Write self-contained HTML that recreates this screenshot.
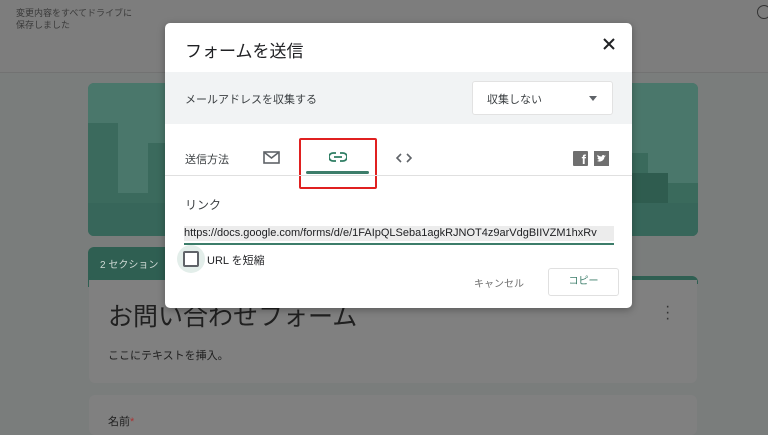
<!DOCTYPE html>
<html><head><meta charset="utf-8"><style>
*{margin:0;padding:0;box-sizing:border-box}
body{width:768px;height:428px;overflow:hidden;background:#7a7d7c;font-family:"Liberation Sans","Noto Sans CJK JP",sans-serif;position:relative}
.top{position:absolute;left:0;top:0;width:768px;height:73px;background:#7d7d7d;border-bottom:1px solid #727272}
.a{position:absolute}
</style></head><body>
<div class="top"></div>
<div class="a" style="left:16px;top:7px;font-size:9px;line-height:12px;color:#3a3a3a">変更内容をすべてドライブに<br>保存しました</div>
<div class="a" style="left:757px;top:5px;width:14px;height:14px;border:1.5px solid #333;border-radius:50%"></div>
<div class="a" style="left:88px;top:83px;width:610px;height:153px;background:#3c6a5e;border-radius:6px;overflow:hidden">
<svg width="610" height="153"><rect width="610" height="153" fill="#4a776b"/><path d="M0 120 L0 40 L30 40 L30 110 L60 110 L60 60 L110 60 L110 120 Z" fill="#3b6a5d"/><path d="M520 153 L520 70 L560 70 L560 100 L610 100 L610 153Z" fill="#3a6a5c"/><path d="M540 120 L540 90 L580 90 L580 120Z" fill="#2f5c4f"/><rect x="0" y="120" width="610" height="33" fill="#37665a"/></svg></div>
<div class="a" style="left:88px;top:247px;width:140px;height:40px;background:#2f5f52;border-radius:6px 6px 0 0;color:#cfd9d5;font-size:10px;padding:9px 12px">2 セクション</div>
<div class="a" style="left:88px;top:276px;width:610px;height:8px;background:#2f5f52;border-radius:6px 6px 0 0"></div>
<div class="a" style="left:89px;top:280px;width:608px;height:103px;background:#808080;border-radius:0 0 6px 6px"></div>
<div class="a" style="left:108px;top:297px;font-size:25px;color:#202020">お問い合わせフォーム</div>
<div class="a" style="left:108px;top:347px;font-size:11px;color:#202020">ここにテキストを挿入。</div>
<div class="a" style="left:665px;top:304px;font-size:16px;color:#333;line-height:6px">·<br>·<br>·</div>
<div class="a" style="left:89px;top:395px;width:608px;height:40px;background:#808080;border-radius:6px"></div>
<div class="a" style="left:108px;top:413px;font-size:11px;color:#202020">名前<span style="color:#a33">*</span></div>
<div class="a" style="left:165px;top:23px;width:467px;height:285px;background:#fff;border-radius:5px;overflow:hidden;box-shadow:0 2px 8px rgba(0,0,0,.3)">
 <div class="a" style="left:20px;top:14px;font-size:17px;color:#202124">フォームを送信</div>
 <svg class="a" style="left:438px;top:15px" width="12" height="12"><path d="M1 1L11 11M11 1L1 11" stroke="#202124" stroke-width="2"/></svg>
 <div class="a" style="left:0;top:49px;width:467px;height:52px;background:#f1f3f4"></div>
 <div class="a" style="left:20px;top:68px;font-size:11px;color:#3c4043">メールアドレスを収集する</div>
 <div class="a" style="left:307px;top:58px;width:141px;height:34px;background:#fff;border:1px solid #e2e2e2;border-radius:3px;font-size:11px;color:#3c4043;padding:9px 14px">収集しない<span style="position:absolute;right:15px;top:14px;border:4px solid transparent;border-top:5px solid #5f6368"></span></div>
 <div class="a" style="left:20px;top:128px;font-size:11px;color:#3c4043">送信方法</div>
 <svg class="a" style="left:98px;top:128px" width="17" height="13"><rect x="1" y="1" width="15" height="11" fill="none" stroke="#5f6368" stroke-width="1.6"/><path d="M1.5 1.5 L8.5 7 L15.5 1.5" fill="none" stroke="#5f6368" stroke-width="1.6"/></svg>
 <svg class="a" style="left:164px;top:129px" width="18" height="10"><path d="M7 1H4a4 4 0 0 0 0 8h3M11 1h3a4 4 0 0 1 0 8h-3M5 5h8" fill="none" stroke="#2e7d63" stroke-width="1.8"/></svg>
 <div class="a" style="left:141px;top:148px;width:63px;height:3px;background:#3c7d6a;border-radius:2px"></div>
 <div class="a" style="left:134px;top:115px;width:78px;height:51px;border:2px solid #e02020;border-radius:2px"></div>
 <svg class="a" style="left:231px;top:130px" width="16" height="10"><path d="M5 1L1 5L5 9M11 1L15 5L11 9" fill="none" stroke="#5f6368" stroke-width="1.6"/></svg>
 <div class="a" style="left:408px;top:128px;width:15px;height:15px;background:#6f6f6f;border-radius:1px;color:#fff;font-size:13px;font-weight:bold;text-align:right;padding-right:2px;line-height:17px">f</div>
 <svg class="a" style="left:429px;top:128px" width="15" height="15"><rect width="15" height="15" fill="#6f6f6f"/><path d="M3 10c3 1.5 7 0 7.5-4l1.5-1.5-1.5.3c-.7-1.3-2.8-1-2.8.8-2 0-3.2-.8-4.2-1.8-.5 1.5 0 2.5 1 3.2h-1c.2 1 1 1.7 2 1.8-.8.6-1.7.9-2.5 1.2z" fill="#fff"/></svg>
 <div class="a" style="left:0;top:152px;width:467px;height:1px;background:#e0e0e0"></div>
 <div class="a" style="left:20px;top:173px;font-size:12px;color:#3c4043">リンク</div>
 <div class="a" style="left:19px;top:203px;width:430px;height:15px;background:#ececec"></div>
 <div class="a" style="left:19px;top:204px;width:430px;font-size:11px;color:#202124;white-space:nowrap;overflow:hidden">https://docs.google.com/forms/d/e/1FAIpQLSeba1agkRJNOT4z9arVdgBIIVZM1hxRv</div>
 <div class="a" style="left:19px;top:220px;width:430px;height:2px;background:#3c7d6a"></div>
 <div class="a" style="left:12px;top:222px;width:28px;height:28px;border-radius:50%;background:#e3eeea"></div>
 <div class="a" style="left:18px;top:228px;width:16px;height:16px;border:2px solid #5f6368;border-radius:2px;background:#fff"></div>
 <div class="a" style="left:42px;top:229px;font-size:11px;color:#202124">URL を短縮</div>
 <div class="a" style="left:309px;top:252px;font-size:10px;color:#6f6f6f">キャンセル</div>
 <div class="a" style="left:383px;top:245px;width:71px;height:28px;border:1px solid #e0e0e0;border-radius:3px;font-size:10px;color:#3c7d6a;text-align:center;line-height:26px">コピー</div>
</div>
</body></html>
